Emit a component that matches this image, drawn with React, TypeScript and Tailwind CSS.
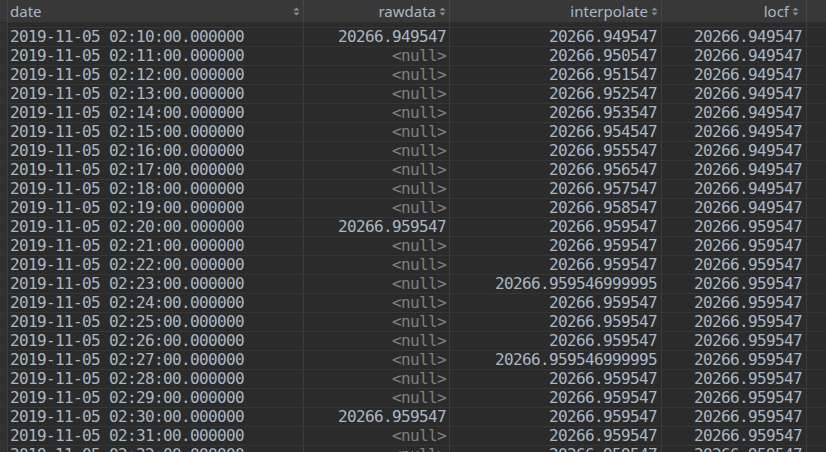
const rows: [string, string | null, string, string][] = [
  ["02:09", null, "20266.948547", "20266.948547"],
  ["02:10", "20266.949547", "20266.949547", "20266.949547"],
  ["02:11", null, "20266.950547", "20266.949547"],
  ["02:12", null, "20266.951547", "20266.949547"],
  ["02:13", null, "20266.952547", "20266.949547"],
  ["02:14", null, "20266.953547", "20266.949547"],
  ["02:15", null, "20266.954547", "20266.949547"],
  ["02:16", null, "20266.955547", "20266.949547"],
  ["02:17", null, "20266.956547", "20266.949547"],
  ["02:18", null, "20266.957547", "20266.949547"],
  ["02:19", null, "20266.958547", "20266.949547"],
  ["02:20", "20266.959547", "20266.959547", "20266.959547"],
  ["02:21", null, "20266.959547", "20266.959547"],
  ["02:22", null, "20266.959547", "20266.959547"],
  ["02:23", null, "20266.959546999995", "20266.959547"],
  ["02:24", null, "20266.959547", "20266.959547"],
  ["02:25", null, "20266.959547", "20266.959547"],
  ["02:26", null, "20266.959547", "20266.959547"],
  ["02:27", null, "20266.959546999995", "20266.959547"],
  ["02:28", null, "20266.959547", "20266.959547"],
  ["02:29", null, "20266.959547", "20266.959547"],
  ["02:30", "20266.959547", "20266.959547", "20266.959547"],
  ["02:31", null, "20266.959547", "20266.959547"],
  ["02:32", null, "20266.959547", "20266.959547"],
];

const SortIcon = () => (
  <svg width="7" height="9" viewBox="0 0 7 9" className="shrink-0">
    <path d="M3.5 0.5 L6.5 3.5 L0.5 3.5 Z" fill="#8a8f95" />
    <path d="M3.5 8.5 L6.5 5.5 L0.5 5.5 Z" fill="#8a8f95" />
  </svg>
);

const mono = "font-['DejaVu_Sans_Mono',monospace] text-[16px] tracking-[-0.63px]";

const App = () => {
  return (
    <div className="w-[826px] h-[452px] overflow-hidden bg-[#2b2b2b] flex flex-col">
      <div className="h-[23px] shrink-0 flex bg-[#383838] border-b border-[#2e2e2e] text-[#a9b7c6] font-['Noto_Sans',sans-serif] text-[15px] leading-[22px] z-10">
        <div className="w-[8px] border-r border-[#454545]" />
        <div className="w-[296px] flex items-center justify-between pl-[2px] pr-[3px] border-r border-[#454545]">
          <span>date</span>
          <SortIcon />
        </div>
        <div className="w-[146px] flex items-center justify-end gap-[3px] pr-[3px] border-r border-[#454545]">
          <span>rawdata</span>
          <SortIcon />
        </div>
        <div className="w-[212px] flex items-center justify-end gap-[3px] pr-[3px] border-r border-[#454545]">
          <span>interpolate</span>
          <SortIcon />
        </div>
        <div className="w-[145px] flex items-center justify-end gap-[3px] pr-[7px] border-r border-[#454545]">
          <span>locf</span>
          <SortIcon />
        </div>
        <div className="flex-1" />
      </div>

      <div className="flex-1 overflow-hidden">
        <div className={`mt-[-14px] ${mono} text-[#a9b7c6]`}>
          {rows.map(([t, raw, interp, locf]) => (
            <div key={t} className="h-[19px] flex border-b border-[#363636] leading-[18px]">
              <div className="w-[8px] bg-[#313131] border-r border-[#3c3c3c]" />
              <div className="w-[296px] pl-[2px] border-r border-[#3c3c3c] whitespace-nowrap">
                2019-11-05 {t}:00.000000
              </div>
              <div className="w-[146px] text-right pr-[3px] border-r border-[#3c3c3c] whitespace-nowrap">
                {raw ?? <span className="text-[#7f7f7f]">&lt;null&gt;</span>}
              </div>
              <div className="w-[212px] text-right pr-[4px] border-r border-[#3c3c3c] whitespace-nowrap">
                {interp}
              </div>
              <div className="w-[145px] text-right pr-[4px] border-r border-[#3c3c3c] whitespace-nowrap">
                {locf}
              </div>
              <div className="flex-1" />
            </div>
          ))}
        </div>
      </div>
    </div>
  );
};

export default App;
